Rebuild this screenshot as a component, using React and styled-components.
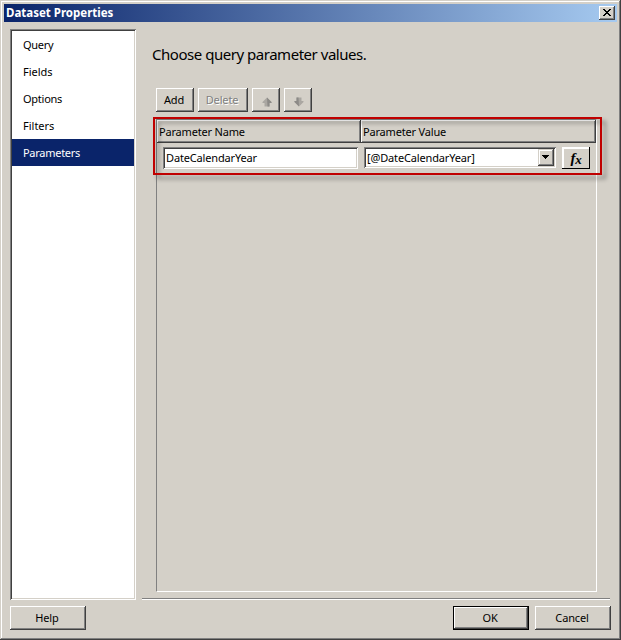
import React, { useState } from "react";
import styled, { createGlobalStyle } from "styled-components";

const GlobalStyle = createGlobalStyle`
  * {
    box-sizing: border-box;
  }
  body {
    margin: 0;
    background: #d4d0c8;
  }
  button,
  input {
    font: inherit;
    letter-spacing: inherit;
    color: inherit;
  }
`;

const Dialog = styled.div`
  width: 621px;
  height: 640px;
  padding: 2px;
  display: flex;
  flex-direction: column;
  background: #d4d0c8;
  color: #000;
  font-family: "Noto Sans", "Open Sans", sans-serif;
  font-size: 11px;
  letter-spacing: -0.15px;
  box-shadow: inset -1px -1px #404040, inset 1px 1px #d4d0c8,
    inset -2px -2px #808080, inset 2px 2px #fff;
`;

const TitleBar = styled.div`
  height: 18px;
  flex: none;
  margin: 2px 2px 0;
  padding: 0 2px;
  display: flex;
  align-items: center;
  justify-content: space-between;
  background: linear-gradient(to right, #0a246a, #a6caf0);
  color: #fff;
  font-size: 11.5px;
  font-weight: 700;
  line-height: 16px;
  letter-spacing: 0;
`;

const CloseButton = styled.button`
  width: 16px;
  height: 14px;
  padding: 0 0 1px;
  border: 0;
  display: flex;
  align-items: center;
  justify-content: center;
  background: #d4d0c8;
  box-shadow: inset -1px -1px #404040, inset 1px 1px #fff,
    inset -2px -2px #808080;
`;

const Body = styled.div`
  height: 571px;
  margin: 7px 8px 0;
  display: flex;
`;

const Sidebar = styled.ul`
  width: 126px;
  margin: 0;
  padding: 2px;
  list-style: none;
  background: #fff;
  box-shadow: inset 1px 1px #808080, inset -1px -1px #fff,
    inset 2px 2px #404040, inset -2px -2px #d4d0c8;
`;

const SidebarItem = styled.li`
  height: 27px;
  padding-left: 11px;
  line-height: 28px;
  letter-spacing: ${({ $spacing }) => $spacing || 0}px;
  background: ${({ $active }) => ($active ? "#0a246a" : "transparent")};
  color: ${({ $active }) => ($active ? "#fff" : "#000")};
`;

const Page = styled.div`
  width: 468px;
  margin-left: 6px;
  padding-left: 14px;
  display: flex;
  flex-direction: column;
  border-bottom: 1px solid #fff;
  box-shadow: inset 0 -1px #808080;
`;

const Heading = styled.h1`
  height: 24px;
  margin: 13px 0 0 -4px;
  font-size: 15px;
  font-weight: 400;
  line-height: 24px;
  letter-spacing: -0.47px;
`;

const Toolbar = styled.div`
  display: flex;
  gap: 4px;
  margin-top: 22px;
`;

const Button = styled.button`
  width: ${({ $width }) => $width}px;
  height: 24px;
  padding: 0 2px 1px 0;
  border: 0;
  display: flex;
  align-items: center;
  justify-content: center;
  background: #d4d0c8;
  box-shadow: inset -1px -1px #404040, inset 1px 1px #fff,
    inset -2px -2px #808080;

  &:disabled {
    color: #808080;
    text-shadow: 1px 1px #fff;
  }
`;

const ArrowButton = styled(Button)`
  padding: 3px 0 0 1px;
`;

const DefaultButton = styled(Button)`
  border: 1px solid #000;
`;

const Grid = styled.div`
  position: relative;
  width: 441px;
  height: 473px;
  margin-top: 7px;
  padding: 1px 1px 0;
  border: 1px solid;
  border-color: #808080 #fff #fff #808080;
`;

const GridHeader = styled.div`
  width: 439px;
  height: 23px;
  margin-top: -1px;
  margin-left: -1px;
  display: flex;
`;

const HeaderCell = styled.div`
  width: ${({ $width }) => $width}px;
  padding-left: 2px;
  line-height: 23px;
  letter-spacing: -0.18px;
  box-shadow: inset -1px -1px #404040, inset 1px 1px #fff,
    inset -2px -2px #808080;
`;

const GridRow = styled.div`
  display: flex;
  align-items: flex-start;
  padding: 4px 0 0 5px;
`;

const fieldEdge = `
  box-shadow: inset 1px 1px #808080, inset -1px -1px #fff,
    inset 2px 2px #404040, inset -2px -2px #d4d0c8;
`;

const NameInput = styled.input`
  width: 195px;
  height: 22px;
  padding: 0 3px 2px;
  border: 0;
  outline: 0;
  background: #fff;
  ${fieldEdge}
`;

const ComboBox = styled.div`
  width: 192px;
  height: 21px;
  margin-left: 6px;
  padding: 2px;
  display: flex;
  background: #fff;
  ${fieldEdge}
`;

const ComboInput = styled.input`
  width: 172px;
  padding: 0 1px;
  border: 0;
  outline: 0;
  background: transparent;
`;

const DropButton = styled(Button)`
  height: 17px;
  box-shadow: inset -1px -1px #404040, inset 1px 1px #d4d0c8,
    inset -2px -2px #808080, inset 2px 2px #fff;
`;

const FxButton = styled(Button)`
  height: 22px;
  margin-left: 6px;
  padding: 1px 0 0;
  font: italic 700 15px/15px "Liberation Serif", serif;
  box-shadow: inset -1px -1px #000, inset 2px 2px #fff;

  sub {
    align-self: flex-end;
    margin-bottom: 2px;
    font-size: 13px;
    line-height: 14px;
  }
`;

const Highlight = styled.div`
  position: absolute;
  left: -4px;
  top: -3px;
  width: 449px;
  height: 58px;
  border: 2px solid #c00000;
  filter: drop-shadow(4px 4px 2px rgba(0, 0, 0, 0.4));
  pointer-events: none;
`;

const Footer = styled.div`
  margin: 6px 8px 0;
  display: flex;
  gap: 6px;

  & > :first-child {
    margin-right: auto;
  }
`;

const pages = [
  { name: "Query", spacing: -0.3 },
  { name: "Fields", spacing: 0 },
  { name: "Options", spacing: -0.25 },
  { name: "Filters", spacing: 0 },
  { name: "Parameters", spacing: -0.28 },
];

function Arrow({ down }) {
  return (
    <svg width="10" height="10">
      <g transform={down ? "rotate(180 5 5)" : undefined}>
        <path d="M5 .5 L9.5 5 V6 H7.5 V9.5 H2.5 V6 H.5 V5 Z" fill="#aaa7a2" />
        <path d="M5 .5 L9.5 5 V6 H7.5 V9.5 H5.5 Z" fill="#8c8a87" />
      </g>
    </svg>
  );
}

function App() {
  const [active, setActive] = useState("Parameters");
  const [name, setName] = useState("DateCalendarYear");
  const [value, setValue] = useState("[@DateCalendarYear]");

  return (
    <>
      <GlobalStyle />
      <Dialog>
        <TitleBar>
          <span>Dataset Properties</span>
          <CloseButton aria-label="Close">
            <svg width="8" height="7" shapeRendering="crispEdges">
              <path
                d="M0 0h2v1h1v1h2v-1h1v-1h2v1h-1v1h-1v1h-1v1h1v1h1v1h1v1h-2v-1h-1v-1h-2v1h-1v1h-2v-1h1v-1h1v-1h1v-1h-1v-1h-1v-1h-1z"
                fill="#000"
              />
            </svg>
          </CloseButton>
        </TitleBar>
        <Body>
          <Sidebar>
            {pages.map((page) => (
              <SidebarItem
                key={page.name}
                $active={page.name === active}
                $spacing={page.spacing}
                onClick={() => setActive(page.name)}
              >
                {page.name}
              </SidebarItem>
            ))}
          </Sidebar>
          <Page>
            <Heading>Choose query parameter values.</Heading>
            <Toolbar>
              <Button $width={38}>Add</Button>
              <Button $width={50} disabled>
                Delete
              </Button>
              <ArrowButton $width={28} disabled aria-label="Move up">
                <Arrow />
              </ArrowButton>
              <ArrowButton $width={28} disabled aria-label="Move down">
                <Arrow down />
              </ArrowButton>
            </Toolbar>
            <Grid>
              <GridHeader>
                <HeaderCell $width={204}>Parameter Name</HeaderCell>
                <HeaderCell $width={235}>Parameter Value</HeaderCell>
              </GridHeader>
              <GridRow>
                <NameInput
                  value={name}
                  onChange={(e) => setName(e.target.value)}
                />
                <ComboBox>
                  <ComboInput
                    value={value}
                    onChange={(e) => setValue(e.target.value)}
                  />
                  <DropButton $width={16} aria-label="Open list">
                    <svg width="7" height="4" shapeRendering="crispEdges">
                      <path d="M0 0h7v1h-1v1h-1v1h-1v1h-1v-1h-1v-1h-1v-1h-1z" />
                    </svg>
                  </DropButton>
                </ComboBox>
                <FxButton $width={28} aria-label="Expression">
                  f<sub>x</sub>
                </FxButton>
              </GridRow>
              <Highlight />
            </Grid>
          </Page>
        </Body>
        <Footer>
          <Button $width={76}>Help</Button>
          <DefaultButton $width={76}>OK</DefaultButton>
          <Button $width={76}>Cancel</Button>
        </Footer>
      </Dialog>
    </>
  );
}

export default App;
